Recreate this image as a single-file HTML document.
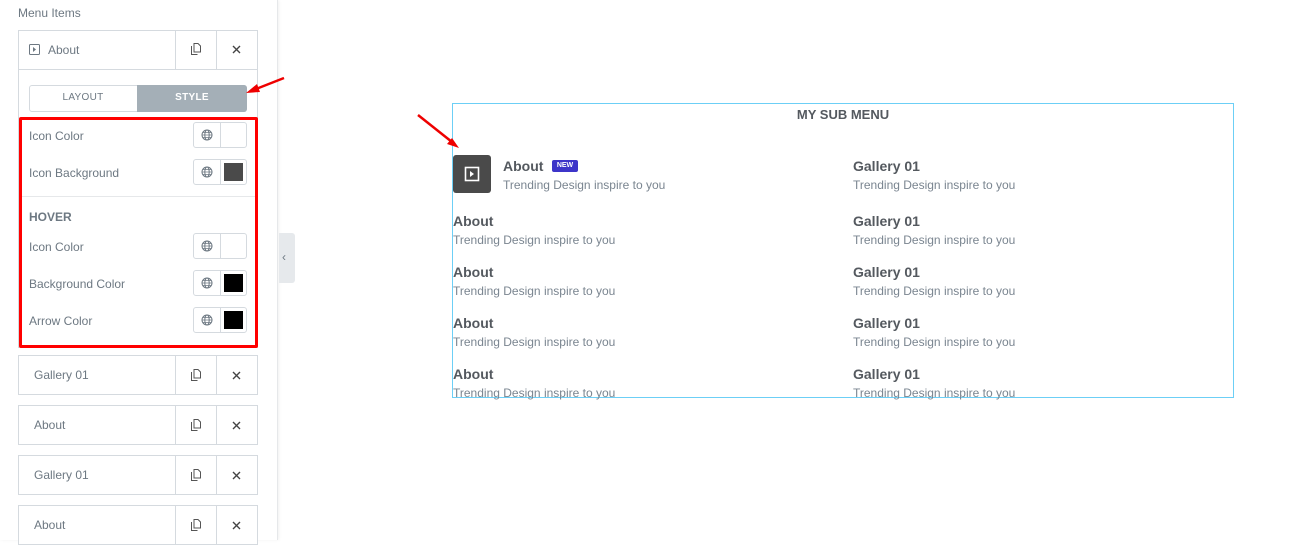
<!DOCTYPE html>
<html><head><style>
*{margin:0;padding:0;box-sizing:border-box}
body{width:1300px;height:540px;overflow:hidden;background:#fff;font-family:"Liberation Sans",sans-serif;position:relative;color:#6d7882}
.a{position:absolute}
.panel{left:0;top:0;width:278px;height:540px;background:#fff;border-right:1px solid #e6e8ea;box-shadow:1px 0 3px rgba(0,0,0,.06)}
.item{position:absolute;left:18px;width:240px;height:40px;border:1px solid #d5dadf;background:#fff}
.item .t{position:absolute;left:15px;top:12px;font-size:12px;color:#6d7882}
.item .c1{position:absolute;left:156px;top:0;width:41px;height:38px;border-left:1px solid #d5dadf}
.item .c2{position:absolute;left:197px;top:0;width:41px;height:38px;border-left:1px solid #d5dadf}
.lbl{position:absolute;left:29px;font-size:12px;color:#6d7882}
.ctl{position:absolute;left:193px;width:54px;height:26px;border:1px solid #d5dadf;border-radius:3px;background:#fff}
.ctl .g{position:absolute;left:0;top:0;width:27px;height:24px;border-right:1px solid #d5dadf}
.ctl .s{position:absolute;left:30px;top:3px;width:19px;height:18px}
.h{position:absolute;font-size:14px;color:#54595f;font-weight:600}
.d{position:absolute;font-size:12px;color:#7a8590}
</style></head><body>
<div class="a panel"></div>
<div class="a" style="left:18px;top:6px;font-size:12px;color:#6d7882">Menu Items</div>

<div class="item" style="top:30px;height:318px">
  <svg class="a" style="left:10px;top:13px" width="11" height="11" viewBox="0 0 11 11"><rect x=".5" y=".5" width="10" height="10" rx="1" fill="none" stroke="#6d7882"/><path d="M4 3l3 2.5L4 8z" fill="#6d7882"/></svg>
  <div class="t" style="left:29px">About</div>
  <div class="c1"></div><div class="c2"></div>
  <div class="a" style="left:0;top:38px;width:238px;border-top:1px solid #d5dadf"></div>
</div>
<svg class="a" style="left:191px;top:43px" width="10" height="12" viewBox="0 0 10 12"><path d="M3 .5h4l2.5 2.5v6H3z M.5 3v8.5h6" fill="none" stroke="#555"/></svg>
<svg class="a" style="left:232px;top:45px" width="9" height="9" viewBox="0 0 9 9"><path d="M1 1l7 7M8 1l-7 7" stroke="#444" stroke-width="1.4"/></svg>

<div class="a" style="left:29px;top:85px;width:218px;height:27px;border:1px solid #d5dadf;border-radius:3px;background:#fff"></div>
<div class="a" style="left:137px;top:85px;width:110px;height:27px;background:#a4afb7;border-radius:0 3px 3px 0"></div>
<div class="a" style="left:29px;top:92px;width:108px;text-align:center;font-size:10px;color:#6d7882;letter-spacing:.3px">LAYOUT</div>
<div class="a" style="left:137px;top:92px;width:110px;text-align:center;font-size:10px;color:#fff;font-weight:bold;letter-spacing:.3px">STYLE</div>

<div class="a" style="left:19px;top:117px;width:239px;height:231px;border:3px solid #f00;border-radius:2px"></div>
<div class="a" style="left:22px;top:196px;width:233px;border-top:1px solid #e6e8ea"></div>
<div class="lbl" style="top:129px">Icon Color</div>
<div class="lbl" style="top:166px">Icon Background</div>
<div class="lbl" style="top:210px;font-weight:bold;color:#6d7882">HOVER</div>
<div class="lbl" style="top:240px">Icon Color</div>
<div class="lbl" style="top:277px">Background Color</div>
<div class="lbl" style="top:314px">Arrow Color</div>

<div class="ctl" style="top:122px"><div class="g"></div></div>
<div class="ctl" style="top:159px"><div class="g"></div><div class="s" style="background:#4a4a4a"></div></div>
<div class="ctl" style="top:233px"><div class="g"></div></div>
<div class="ctl" style="top:270px"><div class="g"></div><div class="s" style="background:#000"></div></div>
<div class="ctl" style="top:307px"><div class="g"></div><div class="s" style="background:#000"></div></div>
<svg class="a" style="left:0;top:0" width="300" height="540">
<defs><g id="gl"><circle cx="0" cy="0" r="5" fill="none" stroke="#6d7882"/><ellipse cx="0" cy="0" rx="2.2" ry="5" fill="none" stroke="#6d7882"/><path d="M-5 0h10M-4.3-2.5h8.6M-4.3 2.5h8.6" stroke="#6d7882" stroke-width=".8"/></g></defs>
<use href="#gl" x="207" y="135"/><use href="#gl" x="207" y="172"/><use href="#gl" x="207" y="246"/><use href="#gl" x="207" y="283"/><use href="#gl" x="207" y="320"/>
</svg>

<div class="item" style="top:355px"><div class="t">Gallery 01</div><div class="c1"></div><div class="c2"></div></div>
<div class="item" style="top:405px"><div class="t">About</div><div class="c1"></div><div class="c2"></div></div>
<div class="item" style="top:455px"><div class="t">Gallery 01</div><div class="c1"></div><div class="c2"></div></div>
<div class="item" style="top:505px"><div class="t">About</div><div class="c1"></div><div class="c2"></div></div>
<svg class="a" style="left:0;top:0" width="300" height="540">
<defs><g id="cp"><path d="M3 .5h4l2.5 2.5v6H3z M.5 3v8.5h6" fill="none" stroke="#555"/></g><g id="xx"><path d="M1 1l7 7M8 1l-7 7" stroke="#444" stroke-width="1.4"/></g></defs>
<use href="#cp" x="191" y="369"/><use href="#xx" x="232" y="371"/>
<use href="#cp" x="191" y="419"/><use href="#xx" x="232" y="421"/>
<use href="#cp" x="191" y="469"/><use href="#xx" x="232" y="471"/>
<use href="#cp" x="191" y="519"/><use href="#xx" x="232" y="521"/>
</svg>

<div class="a" style="left:279px;top:233px;width:16px;height:50px;background:#e6e9ec;border-radius:0 3px 3px 0"></div>
<div class="a" style="left:282px;top:250px;font-size:12px;color:#6d7882">‹</div>

<!-- preview -->
<div class="a" style="left:452px;top:103px;width:782px;height:295px;border:1px solid #6ccff6"></div>
<div class="a" style="left:452px;top:107px;width:782px;text-align:center;font-size:13px;color:#54595f;font-weight:bold">MY SUB MENU</div>
<div class="a" style="left:453px;top:155px;width:38px;height:38px;background:#4a4a4a;border-radius:3px"></div>
<svg class="a" style="left:464px;top:166px" width="16" height="16" viewBox="0 0 16 16"><rect x="1.5" y="1.5" width="13" height="13" fill="none" stroke="#fff" stroke-width="1.6"/><path d="M6 5l4 3-4 3z" fill="#fff"/></svg>
<div class="h" style="left:503px;top:158px">About</div>
<div class="a" style="left:552px;top:160px;width:26px;height:12px;background:#3d35c9;border-radius:2px;color:#fff;font-size:7px;font-weight:bold;text-align:center;line-height:12px">NEW</div>
<div class="d" style="left:503px;top:178px">Trending Design inspire to you</div>
<div class="h" style="left:853px;top:158px">Gallery 01</div>
<div class="d" style="left:853px;top:178px">Trending Design inspire to you</div>

<div class="h" style="left:453px;top:213px">About</div><div class="d" style="left:453px;top:233px">Trending Design inspire to you</div>
<div class="h" style="left:853px;top:213px">Gallery 01</div><div class="d" style="left:853px;top:233px">Trending Design inspire to you</div>
<div class="h" style="left:453px;top:264px">About</div><div class="d" style="left:453px;top:284px">Trending Design inspire to you</div>
<div class="h" style="left:853px;top:264px">Gallery 01</div><div class="d" style="left:853px;top:284px">Trending Design inspire to you</div>
<div class="h" style="left:453px;top:315px">About</div><div class="d" style="left:453px;top:335px">Trending Design inspire to you</div>
<div class="h" style="left:853px;top:315px">Gallery 01</div><div class="d" style="left:853px;top:335px">Trending Design inspire to you</div>
<div class="h" style="left:453px;top:366px">About</div><div class="d" style="left:453px;top:386px">Trending Design inspire to you</div>
<div class="h" style="left:853px;top:366px">Gallery 01</div><div class="d" style="left:853px;top:386px">Trending Design inspire to you</div>

<svg class="a" style="left:0;top:0" width="1300" height="540">
<path d="M284 78L256 89" stroke="#e00" stroke-width="2.5"/><path d="M246 93l11-9 3 8z" fill="#e00"/>
<path d="M418 115L452 142" stroke="#e00" stroke-width="2.5"/><path d="M459 148l-12-4 5-6z" fill="#e00"/>
</svg>
</body></html>
